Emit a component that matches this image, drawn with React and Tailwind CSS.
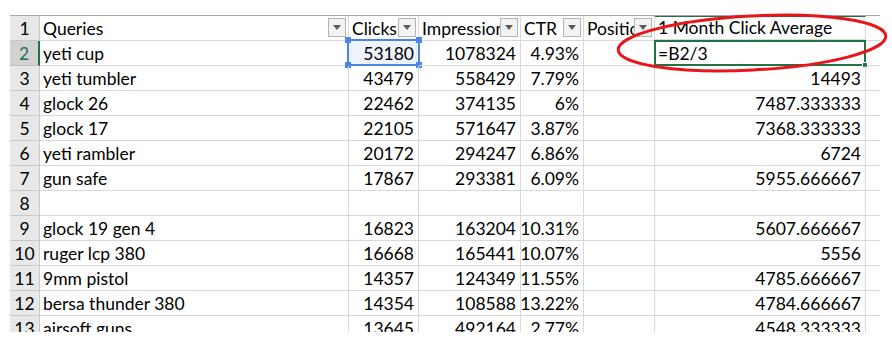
const cols = ['30px', '309px', '70px', '102px', '63px', '71px', '211px', '14px'];

const rows = [
  ['yeti cup', '53180', '1078324', '4.93%', '', '=B2/3'],
  ['yeti tumbler', '43479', '558429', '7.79%', '', '14493'],
  ['glock 26', '22462', '374135', '6%', '', '7487.333333'],
  ['glock 17', '22105', '571647', '3.87%', '', '7368.333333'],
  ['yeti rambler', '20172', '294247', '6.86%', '', '6724'],
  ['gun safe', '17867', '293381', '6.09%', '', '5955.666667'],
  ['', '', '', '', '', ''],
  ['glock 19 gen 4', '16823', '163204', '10.31%', '', '5607.666667'],
  ['ruger lcp 380', '16668', '165441', '10.07%', '', '5556'],
  ['9mm pistol', '14357', '124349', '11.55%', '', '4785.666667'],
  ['bersa thunder 380', '14354', '108588', '13.22%', '', '4784.666667'],
  ['airsoft guns', '13645', '492164', '2.77%', '', '4548.333333'],
];

const headers = ['Queries', 'Clicks', 'Impressions', 'CTR', 'Position', '1 Month Click Average'];

function FilterButton() {
  return (
    <span className="absolute right-[2px] top-[2px] w-[18px] h-[19px] border border-[#b4b4b4] bg-[#f3f3f3] flex items-center justify-center">
      <svg width="8" height="5" viewBox="0 0 8 5">
        <path d="M0 0 H8 L4 5 Z" fill="#5a5a5a" />
      </svg>
    </span>
  );
}

function Handle({ className }) {
  return <span className={`absolute w-[6px] h-[6px] bg-[#4a86e8] ${className}`} />;
}

export default function App() {
  return (
    <div
      className="relative w-[892px] h-[343px] bg-white overflow-hidden text-black"
      style={{ fontFamily: 'Lato, "Open Sans", sans-serif' }}
    >
      <div className="pt-[15px] pl-[10px]">
        <div className="w-[870px] h-[317px] overflow-hidden border-t border-[#a8a8a8]">
          <div
            className="grid text-[17.5px] leading-none"
            style={{ gridTemplateColumns: cols.join(' ') }}
          >
            {/* header row */}
            <div className="h-[25px] bg-[#e8e8e8] border-r border-b border-[#c8c8c8] flex items-end justify-center pb-[3px]">1</div>
            {headers.map((h, i) => (
              <div
                key={h}
                className={`relative h-[25px] border-r border-b border-[#d9d9d9] flex items-end pb-[3px] pl-[3px] overflow-hidden whitespace-nowrap ${i === 5 ? 'border-t-2 border-t-[#217346] -mt-[1px]' : ''}`}
              >
                {h}
                {i < 5 && <FilterButton />}
              </div>
            ))}
            <div className="h-[25px] border-b border-[#d9d9d9]" />

            {rows.map((r, ri) => {
              const n = ri + 2;
              const active = n === 2;
              return [
                <div
                  key={`h${n}`}
                  className={`h-[25px] border-b flex items-end justify-center pb-[3px] ${active ? 'bg-[#d2d2d2] text-[#217346] border-[#bdbdbd] border-r-2 border-r-[#217346]' : 'bg-[#e8e8e8] border-[#c8c8c8] border-r'}`}
                >
                  {n}
                </div>,
                ...r.map((c, ci) => (
                  <div
                    key={`${n}-${ci}`}
                    className={`relative h-[25px] border-r border-b border-[#d9d9d9] flex items-end pb-[3px] whitespace-nowrap ${ci === 0 || (active && ci === 5) ? 'justify-start pl-[3px]' : 'justify-end pr-[4px]'} ${active && ci === 1 ? 'bg-[#eef3fb]' : ''}`}
                  >
                    {active && ci === 1 && (
                      <span className="absolute -left-[2px] -top-[2px] w-[73px] h-[27px] border-2 border-[#4a86e8]">
                        <Handle className="-left-[4px] -top-[4px]" />
                        <Handle className="-right-[4px] -top-[4px]" />
                        <Handle className="-left-[4px] -bottom-[4px]" />
                        <Handle className="-right-[4px] -bottom-[4px]" />
                      </span>
                    )}
                    {active && ci === 5 && (
                      <span className="absolute -left-[1px] -top-[1px] w-[212px] h-[26px] border-2 border-[#217346]">
                        <span className="absolute -right-[4px] -bottom-[4px] w-[6px] h-[6px] bg-[#217346] border border-white" />
                      </span>
                    )}
                    <span className="relative">{c}</span>
                  </div>
                )),
                <div key={`g${n}`} className="h-[25px] border-b border-[#d9d9d9]" />,
              ];
            })}
          </div>
        </div>
      </div>

      <svg className="absolute left-0 top-0 pointer-events-none" width="892" height="343">
        <ellipse
          cx="752"
          cy="43"
          rx="134"
          ry="27"
          transform="rotate(-3 752 43)"
          fill="none"
          stroke="#e8161b"
          strokeWidth="3"
        />
      </svg>
    </div>
  );
}
